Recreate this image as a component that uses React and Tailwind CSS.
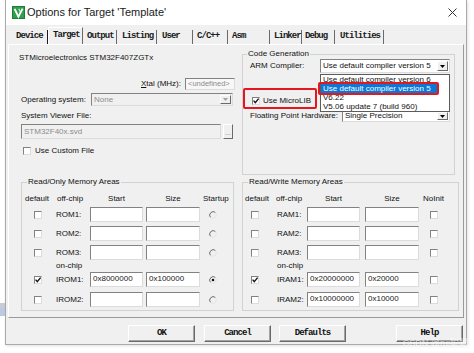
import React from 'react';

const SANS = "font-['Liberation_Sans',Arial,sans-serif]";
const MONO = "font-['Liberation_Mono','Courier_New',monospace]";
const SUNKEN = 'border border-t-[#828282] border-l-[#828282] border-r-[#dcdcdc] border-b-[#dcdcdc]';
const RAISED = 'border border-t-white border-l-white border-r-[#6a6a6a] border-b-[#6a6a6a]';

function Logo({ className }) {
  return (
    <svg width="13" height="13" viewBox="0 0 13 13" className={className}>
      <rect width="13" height="13" fill="#1d7f36" />
      <rect x="1" y="1" width="11" height="11" fill="#2f9f4c" />
      <path d="M2.6 2.8 L6.4 10.6 L10.6 2.6" fill="none" stroke="#fff" strokeWidth="1.9" />
      <path d="M6.8 2.8 L8.4 6" fill="none" stroke="#cfeed6" strokeWidth="1.2" />
    </svg>
  );
}

function Check({ checked }) {
  return (
    <span className={`relative block h-[8px] w-[8px] shrink-0 bg-white ${SUNKEN}`}>
      {checked && (
        <svg viewBox="0 0 8 8" className="absolute -left-px -top-px h-[8px] w-[8px]">
          <path d="M1.6 3.6 L3.3 5.6 L6.6 1.6" fill="none" stroke="#111" strokeWidth="1.4" />
        </svg>
      )}
    </span>
  );
}

function Radio({ on }) {
  return (
    <svg width="8" height="8" viewBox="0 0 8 8">
      <path d="M6.5 1.5 A3.55 3.55 0 0 0 1.5 6.5" fill="none" stroke="#6c6c6c" strokeWidth="1" />
      <path d="M1.5 6.5 A3.55 3.55 0 0 0 6.5 1.5" fill="none" stroke="#e4e4e4" strokeWidth="1" />
      {on && <circle cx="4" cy="4" r="1.3" fill="#111" />}
    </svg>
  );
}

function Select({ className, text, disabled, children }) {
  return (
    <div
      className={`relative flex h-full items-center ${SUNKEN} ${
        disabled ? 'bg-[#f0f0f0] text-[#8c8c8c]' : 'bg-white text-[#111]'
      } ${className}`}
    >
      <span className="flex-1 overflow-hidden whitespace-nowrap pl-[2px] leading-[10px]">{text}</span>
      <span className={`mr-px flex h-[calc(100%-2px)] w-[11px] items-center justify-center bg-[#f0f0f0] ${RAISED}`}>
        <svg width="5" height="3" viewBox="0 0 5 3">
          <path d="M0 0H5L2.5 3Z" fill={disabled ? '#a0a0a0' : '#000'} />
        </svg>
      </span>
      {children}
    </div>
  );
}

function Field({ className, text }) {
  return (
    <div className={`h-full bg-white pl-[2px] pt-px leading-[10px] text-[#222] ${SUNKEN} ${className}`}>{text}</div>
  );
}

const TABS = [
  ['Device', 'w-[40px] pl-[8px] h-[14px]'],
  ['Target', 'w-[35px] pl-[4px] h-[17px] border-t border-l border-t-white border-l-white border-r-[#6a6a6a]'],
  ['Output', 'w-[34px] pl-[4px] h-[14px] border-r-[#6a6a6a]'],
  ['Listing', 'w-[40px] pl-[5px] h-[14px] border-r-[#6a6a6a]'],
  ['User', 'w-[36px] pl-[5px] h-[14px] border-r-[#6a6a6a]'],
  ['C/C++', 'w-[35px] pl-[4px] h-[14px] border-r-[#6a6a6a]'],
  ['Asm', 'w-[42px] pl-[4px] h-[14px] border-r-[#6a6a6a]'],
  ['Linker', 'w-[32px] pl-[4px] h-[14px] border-r-[#6a6a6a]'],
  ['Debug', 'w-[33px] pl-[3px] h-[14px] border-r-[#6a6a6a]'],
  ['Utilities', 'w-[49px] pl-[5px] h-[14px] border-r-[#6a6a6a]'],
];

const LEFT = {
  c1: 'w-[31px]',
  c2: 'w-[37px] pl-[3px]',
  gap: 'ml-[3px]',
  c6: 'w-[26px]',
  h1: 'pl-[3px]',
  h2: 'pl-[4px]',
};
const RIGHT = {
  c1: 'w-[23px]',
  c2: 'w-[41px] pl-[11px]',
  gap: 'ml-[5px]',
  c6: 'w-[29px]',
  h1: 'pl-[2px]',
  h2: 'pl-[10px]',
};

function MemHeader({ cfg, last }) {
  return (
    <div className="mt-[7px] flex h-[10px] items-center whitespace-nowrap leading-[10px]">
      <span className={`${cfg.c1} ${cfg.h1}`}>default</span>
      <span className={`${cfg.c2.split(' ')[0]} ${cfg.h2}`}>off-chip</span>
      <span className="w-[53px] text-center">Start</span>
      <span className={`w-[54px] text-center ${cfg.gap}`}>Size</span>
      <span className={`${cfg.c6} ${last === 'Startup' ? 'pl-[3px]' : 'text-center'}`}>{last}</span>
    </div>
  );
}

function MemRow({ cfg, mt, def, label, start, size, tail }) {
  return (
    <div className={`flex h-[15px] items-center ${mt}`}>
      <span className={`flex justify-center ${cfg.c1}`}>
        <Check checked={def} />
      </span>
      <span className={`whitespace-nowrap leading-[10px] ${cfg.c2}`}>{label}</span>
      <Field className="w-[53px]" text={start} />
      <Field className={`w-[54px] ${cfg.gap}`} text={size} />
      <span className={`flex justify-center ${cfg.c6}`}>{tail}</span>
    </div>
  );
}

function OnChip({ cfg }) {
  return (
    <div className="flex h-[11px] items-center leading-[10px]">
      <span className={cfg.c1} />
      <span className={cfg.c2}>on-chip</span>
    </div>
  );
}

function Btn({ className, children }) {
  return (
    <div
      className={`flex h-[17px] w-[67px] items-center justify-center bg-[#f0f0f0] shadow-[inset_-1px_-1px_0_#a3a3a3] ${RAISED} ${MONO} text-[9px] font-bold tracking-[-0.95px] text-[#111] ${className}`}
    >
      {children}
    </div>
  );
}

export default function App() {
  return (
    <div className={`relative flex h-[353px] w-[474px] overflow-hidden bg-white text-[8px] text-[#111] ${SANS}`}>
      <div className="flex w-[5px] flex-col">
        <div className="h-[303px]" />
        <div className="h-[5px] bg-[#c9cdd3]" />
        <div className="h-[8px] bg-[#bccbe0]" />
      </div>

      <div className="flex h-[345px] w-[462px] flex-col border-x border-b border-[#a9a9a9] shadow-[1px_1px_3px_rgba(0,0,0,0.12)]">
        {/* title bar */}
        <div className="flex h-[25px] shrink-0 items-center bg-white">
          <Logo className="ml-[6px]" />
          <span className="ml-[2px] text-[11px] leading-none text-[#1a1a1a]">Options for Target 'Template'</span>
          <svg width="9" height="9" viewBox="0 0 9 9" className="ml-auto mr-[9px]">
            <path d="M0.5 0.5 L8.5 8.5 M8.5 0.5 L0.5 8.5" stroke="#333" strokeWidth="1" />
          </svg>
        </div>

        <div className="flex flex-1 flex-col bg-[#f0f0f0]">
          {/* tabs */}
          <div className={`flex h-[19px] shrink-0 items-end pl-[2px] ${MONO} text-[9px] font-bold tracking-[-0.95px] text-[#1a1a1a]`}>
            {TABS.map(([t, cls]) => (
              <span key={t} className={`flex items-center whitespace-nowrap border-r ${cls}`}>
                {t}
              </span>
            ))}
          </div>

          {/* tab panel */}
          <div className="ml-[2px] flex h-[274px] w-[456px] flex-col border border-t-white border-l-white border-r-[#9a9a9a] border-b-[#9a9a9a]">
            <div className="flex h-[131px] shrink-0">
              {/* left column */}
              <div className="flex w-[227px] flex-col">
                <div className="mt-[8px] h-[10px] pl-[10px] leading-[10px]">STMicroelectronics STM32F407ZGTx</div>
                <div className="mt-[15px] flex h-[12px] items-center justify-end pr-px">
                  <span className="leading-[10px]">
                    <u>X</u>tal (MHz):
                  </span>
                  <div className={`ml-[4px] h-full w-[50px] bg-[#f7f7f7] pl-[2px] text-[7.5px] leading-[10px] text-[#8c8c8c] ${SUNKEN}`}>
                    &lt;undefined&gt;
                  </div>
                </div>
                <div className="mt-[3px] flex h-[13px] items-center">
                  <span className="w-[82px] pl-[12px] leading-[10px]">Operating system:</span>
                  <Select className="w-[142px]" text="None" disabled />
                </div>
                <div className="mt-[5px] h-[10px] pl-[12px] leading-[10px]">System Viewer File:</div>
                <div className="mt-[3px] flex h-[15px] pl-[12px]">
                  <div className={`h-full w-[200px] bg-[#f0f0f0] pl-[2px] pt-px leading-[11px] text-[#8c8c8c] ${SUNKEN}`}>
                    STM32F40x.svd
                  </div>
                  <div className={`ml-[2px] flex h-full w-[10px] items-end justify-center bg-[#f0f0f0] pb-[2px] text-[7px] leading-none text-[#777] ${RAISED}`}>
                    ...
                  </div>
                </div>
                <div className="mt-[7px] flex h-[10px] items-center pl-[14px]">
                  <Check />
                  <span className="ml-[4px] leading-[10px]">Use Custom File</span>
                </div>
              </div>

              {/* code generation */}
              <fieldset className="ml-[6px] mt-[4px] flex h-[126px] w-[213px] flex-col border border-[#d2d2d2]">
                <legend className="ml-[4px] px-px leading-[10px]">Code Generation</legend>
                <div className="flex h-[14px] items-center">
                  <span className="w-[77px] pl-[7px] leading-[10px]">ARM Compiler:</span>
                  <Select className="w-[130px]" text="Use default compiler version 5">
                    <div className="absolute left-[-1px] top-[14px] z-10 w-[130px] border border-[#5c5c5c] bg-white">
                      <div className="h-[9px] whitespace-nowrap pl-[2px] leading-[9px]">Use default compiler version 6</div>
                      <div className="relative h-[9px] w-[117px] whitespace-nowrap bg-[#0a78d7] pl-[2px] leading-[9px] text-white">
                        Use default compiler version 5
                        <span className="absolute left-[-3px] top-[-2px] h-[13px] w-[121px] rounded-[2px] border-2 border-[#e3171c]" />
                      </div>
                      <div className="h-[9px] pl-[2px] leading-[9px]">V6.22</div>
                      <div className="h-[9px] whitespace-nowrap pl-[2px] leading-[9px]">V5.06 update 7 (build 960)</div>
                    </div>
                  </Select>
                </div>
                <div className="relative mt-[22px] flex h-[11px] items-center pl-[9px]">
                  <Check checked />
                  <span className="ml-[3px] leading-[10px]">Use MicroLIB</span>
                  <span className="absolute left-0 top-[-7px] h-[21px] w-[74px] rounded-[2px] border-2 border-[#e3171c]" />
                </div>
                <div className="mt-[4px] flex h-[12px] items-center">
                  <span className="w-[99px] whitespace-nowrap pl-[7px] leading-[10px]">Floating Point Hardware:</span>
                  <Select className="w-[108px]" text="Single Precision" />
                </div>
              </fieldset>
            </div>

            {/* memory areas */}
            <div className="mt-px flex">
              <fieldset className="ml-[12px] flex h-[134px] w-[213px] flex-col border border-[#d2d2d2]">
                <legend className="ml-[5px] px-px leading-[10px]">Read/Only Memory Areas</legend>
                <MemHeader cfg={LEFT} last="Startup" />
                <MemRow cfg={LEFT} mt="mt-[3px]" label="ROM1:" tail={<Radio />} />
                <MemRow cfg={LEFT} mt="mt-[4px]" label="ROM2:" tail={<Radio />} />
                <MemRow cfg={LEFT} mt="mt-[4px]" label="ROM3:" tail={<Radio />} />
                <OnChip cfg={LEFT} />
                <MemRow cfg={LEFT} mt="mt-px" def label="IROM1:" start="0x8000000" size="0x100000" tail={<Radio on />} />
                <MemRow cfg={LEFT} mt="mt-[5px]" label="IROM2:" tail={<Radio />} />
              </fieldset>

              <fieldset className="ml-[8px] flex h-[134px] w-[217px] flex-col border border-[#d2d2d2]">
                <legend className="ml-[5px] px-px leading-[10px]">Read/Write Memory Areas</legend>
                <MemHeader cfg={RIGHT} last="NoInit" />
                <MemRow cfg={RIGHT} mt="mt-[3px]" label="RAM1:" tail={<Check />} />
                <MemRow cfg={RIGHT} mt="mt-[4px]" label="RAM2:" tail={<Check />} />
                <MemRow cfg={RIGHT} mt="mt-[4px]" label="RAM3:" tail={<Check />} />
                <OnChip cfg={RIGHT} />
                <MemRow cfg={RIGHT} mt="mt-px" def label="IRAM1:" start="0x20000000" size="0x20000" tail={<Check />} />
                <MemRow cfg={RIGHT} mt="mt-[5px]" label="IRAM2:" start="0x10000000" size="0x10000" tail={<Check />} />
              </fieldset>
            </div>
          </div>

          {/* buttons */}
          <div className="mt-[7px] flex">
            <Btn className="ml-[122px]">OK</Btn>
            <Btn className="ml-[9px]">Cancel</Btn>
            <Btn className="ml-[8px]">Defaults</Btn>
            <Btn className="ml-[50px]">Help</Btn>
          </div>
        </div>
      </div>

      <span className="absolute bottom-[5px] right-[6px] font-['Liberation_Sans','Noto_Sans_CJK_SC',sans-serif] text-[9px] leading-none text-white/70">
        CSDN @rui聪聪
      </span>
    </div>
  );
}
